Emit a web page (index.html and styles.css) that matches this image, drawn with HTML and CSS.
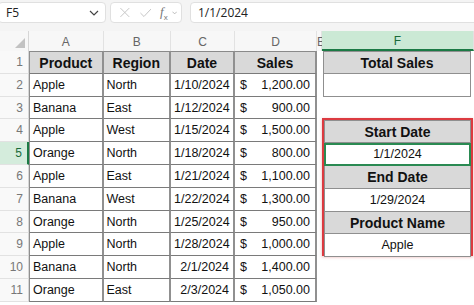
FILE: index.html
```html
<!DOCTYPE html>
<html lang="en">
<head>
  <meta charset="UTF-8">
  <title>Sales sheet</title>
  <link rel="stylesheet" href="styles.css">
</head>
<body>
  <header class="toolbar">
    <div class="namebox">
      <span>F5</span>
      <svg class="chev" width="10" height="6" viewBox="0 0 10 6"><path d="M1 1l4 4 4-4" fill="none" stroke="#444" stroke-width="1.2"/></svg>
    </div>
    <div class="fxbox">
      <svg width="11" height="11" viewBox="0 0 11 11"><path d="M0.5 0.5l10 10M10.5 0.5l-10 10" stroke="#c4c4c4" stroke-width="1.1"/></svg>
      <svg width="13" height="10" viewBox="0 0 13 10"><path d="M0.5 5l4 4 8-8.5" fill="none" stroke="#c4c4c4" stroke-width="1.1"/></svg>
      <span class="fx"><i>f</i><sub>x</sub></span>
      <svg width="6" height="4" viewBox="0 0 6 4"><path d="M0.5 0.5l2.5 2.5 2.5-2.5" fill="none" stroke="#aaa" stroke-width="0.9"/></svg>
    </div>
    <div class="formula">1/1/2024</div>
  </header>

  <main class="sheet">
    <div class="corner"></div>
    <div class="colhead">A</div>
    <div class="colhead">B</div>
    <div class="colhead">C</div>
    <div class="colhead">D</div>
    <div class="colhead">E</div>
    <div class="colhead active">F</div>

    <div class="rowhead">1</div>
    <div class="cell head first">Product</div>
    <div class="cell head">Region</div>
    <div class="cell head">Date</div>
    <div class="cell head">Sales</div>
    <div class="blank"></div>
    <div class="fcell">
      <div class="box head top">Total Sales</div>
    </div>

    <div class="rowhead">2</div>
    <div class="cell first">Apple</div>
    <div class="cell">North</div>
    <div class="cell num">1/10/2024</div>
    <div class="cell money"><span>$</span><span>1,200.00</span></div>
    <div class="blank"></div>
    <div class="fcell">
      <div class="box"></div>
    </div>

    <div class="rowhead">3</div>
    <div class="cell first">Banana</div>
    <div class="cell">East</div>
    <div class="cell num">1/12/2024</div>
    <div class="cell money"><span>$</span><span>900.00</span></div>
    <div class="blank"></div>
    <div class="blank"></div>

    <div class="rowhead">4</div>
    <div class="cell first">Apple</div>
    <div class="cell">West</div>
    <div class="cell num">1/15/2024</div>
    <div class="cell money"><span>$</span><span>1,500.00</span></div>
    <div class="blank"></div>
    <div class="criteria">
      <div class="box head top">Start Date</div>
      <div class="box selected">1/1/2024</div>
      <div class="box head">End Date</div>
      <div class="box">1/29/2024</div>
      <div class="box head">Product Name</div>
      <div class="box">Apple</div>
    </div>

    <div class="rowhead current">5</div>
    <div class="cell first">Orange</div>
    <div class="cell">North</div>
    <div class="cell num">1/18/2024</div>
    <div class="cell money"><span>$</span><span>800.00</span></div>
    <div class="blank"></div>

    <div class="rowhead">6</div>
    <div class="cell first">Apple</div>
    <div class="cell">East</div>
    <div class="cell num">1/21/2024</div>
    <div class="cell money"><span>$</span><span>1,100.00</span></div>
    <div class="blank"></div>

    <div class="rowhead">7</div>
    <div class="cell first">Banana</div>
    <div class="cell">West</div>
    <div class="cell num">1/22/2024</div>
    <div class="cell money"><span>$</span><span>1,300.00</span></div>
    <div class="blank"></div>

    <div class="rowhead">8</div>
    <div class="cell first">Orange</div>
    <div class="cell">North</div>
    <div class="cell num">1/25/2024</div>
    <div class="cell money"><span>$</span><span>950.00</span></div>
    <div class="blank"></div>

    <div class="rowhead">9</div>
    <div class="cell first">Apple</div>
    <div class="cell">North</div>
    <div class="cell num">1/28/2024</div>
    <div class="cell money"><span>$</span><span>1,000.00</span></div>
    <div class="blank"></div>

    <div class="rowhead">10</div>
    <div class="cell first">Banana</div>
    <div class="cell">North</div>
    <div class="cell num">2/1/2024</div>
    <div class="cell money"><span>$</span><span>1,400.00</span></div>
    <div class="blank"></div>
    <div class="blank"></div>

    <div class="rowhead">11</div>
    <div class="cell first">Orange</div>
    <div class="cell">East</div>
    <div class="cell num">2/3/2024</div>
    <div class="cell money"><span>$</span><span>1,050.00</span></div>
    <div class="blank"></div>
    <div class="blank"></div>
  </main>
</body>
</html>
```

FILE: styles.css
```css
* { box-sizing: border-box; }

html, body {
  margin: 0;
  overflow: hidden;
  background: #fff;
}

body {
  font-family: "Liberation Sans", Arial, sans-serif;
  color: #111;
}

/* Formula bar */

.toolbar {
  display: flex;
  align-items: flex-start;
  height: 31px;
  padding-top: 2px;
  background: #f4f4f4;
}

.namebox,
.fxbox,
.formula {
  height: 21px;
  background: #fff;
  border: 1px solid #e0e0e0;
  border-radius: 4px;
  display: flex;
  align-items: center;
  font-family: "Open Sans", "Liberation Sans", sans-serif;
  font-size: 12px;
  color: #222;
}

.namebox {
  width: 108px;
  margin-left: -2px;
  padding: 0 6px 0 7px;
  justify-content: space-between;
}

.fxbox {
  width: 72px;
  margin-left: 4px;
  padding: 0 4px 0 9px;
  gap: 10px;
}

.fx {
  font-family: "Liberation Serif", serif;
  font-size: 13px;
  color: #777;
  margin-left: -1px;
  margin-right: -6px;
}

.fx sub {
  font-family: "Liberation Sans", sans-serif;
  font-size: 8px;
}

.formula {
  flex: 1;
  margin-left: 8px;
  margin-right: -4px;
  padding-left: 7px;
}

/* Sheet grid */

.sheet {
  display: grid;
  grid-template-columns: 29px 74.5px 67.5px 64px 82px 5px 152px;
  grid-template-rows: 20px repeat(11, 22.8px);
}

.corner {
  position: relative;
  background: #f7f7f7;
  border-right: 1px solid #d6d6d6;
}

.corner::after {
  content: "";
  position: absolute;
  right: 3px;
  bottom: 3px;
  border-left: 10px solid transparent;
  border-bottom: 10px solid #c2c2c2;
}

.colhead {
  background: #f7f7f7;
  border-right: 1px solid #e2e2e2;
  color: #666;
  font-size: 12px;
  text-align: center;
  line-height: 22px;
}

.colhead.active {
  background: #cbe9d5;
  color: #1a6a3a;
  border-bottom: 2px solid #1b7a45;
  line-height: 20px;
}

.rowhead {
  background: #f9f9f9;
  border-bottom: 1px solid #e2e2e2;
  border-right: 1px solid #d6d6d6;
  color: #777;
  font-size: 12px;
  text-align: right;
  padding-right: 5px;
  line-height: 22px;
}

.rowhead.current {
  background: #d4ecdc;
  color: #1a6a3a;
  border-right: 2px solid #1b7a45;
}

.cell {
  border-right: 2px solid #909090;
  border-bottom: 1px solid #7a7a7a;
  font-size: 12.5px;
  line-height: 22px;
  padding: 0 3px;
  white-space: nowrap;
}

.cell.first {
  border-left: 1px solid #909090;
}

.cell.head {
  background: #d9d9d9;
  font-weight: bold;
  font-size: 14px;
  text-align: center;
  border-top: 1px solid #8a8a8a;
}

.cell.num {
  text-align: right;
  padding-right: 4px;
}

.cell.money {
  display: flex;
  justify-content: space-between;
  padding: 0 5px 0 5px;
}

/* Column F boxes */

.fcell {
  padding: 0 3px 0 1px;
}

.box {
  height: 22.8px;
  border: 1px solid #8f8f8f;
  border-top: none;
  background: #fff;
  font-size: 12.5px;
  line-height: 22px;
  text-align: center;
}

.box.top {
  border-top: 1px solid #8f8f8f;
}

.box.head {
  background: #d9d9d9;
  font-weight: bold;
  font-size: 14px;
}

.box.selected {
  border: 2px solid #2a8a52;
  line-height: 19px;
}

.criteria {
  grid-column: 7;
  grid-row: 5 / span 6;
  margin: -1px 1px 0 0;
  border: 2px solid #dc3a40;
  box-shadow: 0 1px 3px rgba(200, 40, 40, 0.35);
  display: flex;
  flex-direction: column;
}

.criteria .box {
  height: 22.8px;
}
```
